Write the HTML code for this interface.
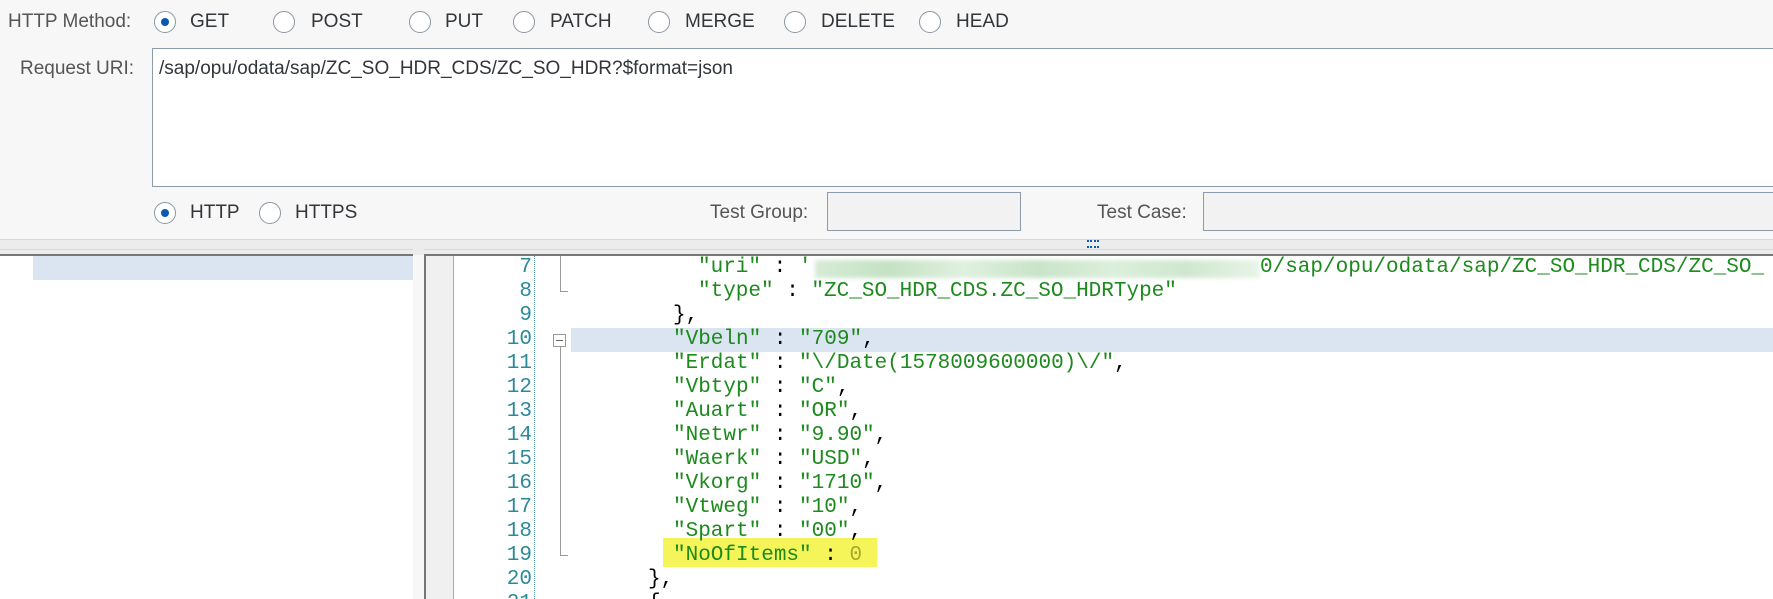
<!DOCTYPE html>
<html><head><meta charset="utf-8"><style>
*{margin:0;padding:0;box-sizing:border-box}
html{background:#fff;width:1773px;height:599px;overflow:hidden}
body{width:1773px;height:599px;overflow:hidden;background:#f7f7f7;font-family:"Liberation Sans",sans-serif;color:#32363a;position:relative}
.a{position:absolute;white-space:nowrap}
.lbl{font-size:19px;color:#555}
.t{font-size:19px;color:#32363a}
.r{position:absolute;width:22px;height:22px;border:1px solid #8a96a3;border-radius:50%;background:#fff}
.r.on::after{content:"";position:absolute;left:6px;top:6px;width:8px;height:8px;border-radius:50%;background:#0a58b0}
.code{font-family:"Liberation Mono",monospace;font-size:21px;line-height:24px;color:#1d8a1d}
.k{color:#000}
.ln{position:absolute;left:455px;width:77px;text-align:right;font-family:"Liberation Mono",monospace;font-size:21px;line-height:24px;color:#2b8a9a}
</style></head><body>
<div class="a lbl" style="left:8px;top:11px">HTTP Method:</div>
<div class="r on" style="left:154px;top:11px"></div><div class="a t" style="left:190px;top:11px">GET</div>
<div class="r" style="left:273px;top:11px"></div><div class="a t" style="left:311px;top:11px">POST</div>
<div class="r" style="left:409px;top:11px"></div><div class="a t" style="left:445px;top:11px">PUT</div>
<div class="r" style="left:513px;top:11px"></div><div class="a t" style="left:550px;top:11px">PATCH</div>
<div class="r" style="left:648px;top:11px"></div><div class="a t" style="left:685px;top:11px">MERGE</div>
<div class="r" style="left:784px;top:11px"></div><div class="a t" style="left:821px;top:11px">DELETE</div>
<div class="r" style="left:919px;top:11px"></div><div class="a t" style="left:956px;top:11px">HEAD</div>

<div class="a lbl" style="left:20px;top:58px">Request URI:</div>
<div class="a" style="left:152px;top:48px;width:1630px;height:139px;background:#fff;border:1px solid #8c9bab"></div>
<div class="a t" style="left:159px;top:58px">/sap/opu/odata/sap/ZC_SO_HDR_CDS/ZC_SO_HDR?$format=json</div>

<div class="r on" style="left:154px;top:202px"></div><div class="a t" style="left:190px;top:202px">HTTP</div>
<div class="r" style="left:259px;top:202px"></div><div class="a t" style="left:295px;top:202px">HTTPS</div>
<div class="a lbl" style="left:710px;top:202px">Test Group:</div>
<div class="a" style="left:827px;top:192px;width:194px;height:39px;background:#f2f2f2;border:1px solid #8c9bab"></div>
<div class="a lbl" style="left:1097px;top:202px">Test Case:</div>
<div class="a" style="left:1203px;top:192px;width:580px;height:39px;background:#f2f2f2;border:1px solid #8c9bab"></div>

<div class="a" style="left:0;top:239px;width:1773px;height:16px;background:#ececec;border-top:1px solid #d8d8d8"></div>
<div class="a" style="left:0;top:249px;width:413px;height:1px;background:#d8d8d8"></div>
<div class="a" style="left:424px;top:249px;width:1349px;height:1px;background:#d8d8d8"></div>
<div class="a" style="left:1087px;top:240px;width:12px;border-top:2px dotted #0a58b0"></div>
<div class="a" style="left:1087px;top:246px;width:12px;border-top:2px dotted #0a58b0"></div>

<div class="a" style="left:0;top:254px;width:413px;height:345px;background:#fff;border-top:2px solid #777"></div>
<div class="a" style="left:33px;top:256px;width:380px;height:24px;background:#dbe5f1"></div>

<div class="a" style="left:424px;top:254px;width:1349px;height:345px;overflow:hidden;background:#fff;border-top:2px solid #777;border-left:2px solid #777"></div>
<div class="a" style="left:426px;top:256px;width:28px;height:343px;background:#f0f0f0;border-right:1px solid #aaa"></div>
<div class="a" style="left:534px;top:256px;height:343px;border-left:1px dotted #5a9aa8"></div>
<div class="a" style="left:571px;top:328px;width:1202px;height:24px;background:#dbe5f1"></div>
<div class="a" style="left:663px;top:538px;width:214px;height:29px;background:#f5f55a"></div>
<div class="a" style="left:560px;top:256px;width:8px;height:36px;border-left:1px solid #999;border-bottom:1px solid #999"></div>
<div class="a" style="left:553px;top:334px;width:13px;height:13px;border:1px solid #999;background:#fff"></div>
<div class="a" style="left:556px;top:340px;width:7px;height:1px;background:#666"></div>
<div class="a" style="left:560px;top:347px;width:8px;height:209px;border-left:1px solid #999;border-bottom:1px solid #999"></div>

<div class="ln" style="top:256px">7<br>8<br>9<br>10<br>11<br>12<br>13<br>14<br>15<br>16<br>17<br>18<br>19<br>20<br>21</div>

<div class="a code" style="left:698px;top:256px">"uri" <span class="k">:</span> '</div>
<div class="a" style="left:815px;top:260px;width:445px;height:18px;background:linear-gradient(90deg,#d6ebd6,#c4e2c4,#e0f0e0,#c8e4c8,#dcefdc,#cfe7cf,#e8f4e8);filter:blur(2px)"></div>
<div class="a code" style="left:1260px;top:256px">0/sap/opu/odata/sap/ZC_SO_HDR_CDS/ZC_SO_</div>
<div class="a code" style="left:698px;top:280px">"type" <span class="k">:</span> "ZC_SO_HDR_CDS.ZC_SO_HDRType"</div>
<div class="a code k" style="left:673px;top:304px">},</div>
<div class="a code" style="left:673px;top:328px">"Vbeln" <span class="k">:</span> "709"<span class="k">,</span><br>"Erdat" <span class="k">:</span> "\/Date(1578009600000)\/"<span class="k">,</span><br>"Vbtyp" <span class="k">:</span> "C"<span class="k">,</span><br>"Auart" <span class="k">:</span> "OR"<span class="k">,</span><br>"Netwr" <span class="k">:</span> "9.90"<span class="k">,</span><br>"Waerk" <span class="k">:</span> "USD"<span class="k">,</span><br>"Vkorg" <span class="k">:</span> "1710"<span class="k">,</span><br>"Vtweg" <span class="k">:</span> "10"<span class="k">,</span><br>"Spart" <span class="k">:</span> "00"<span class="k">,</span><br>"NoOfItems" <span class="k">:</span> <span style="color:#a8a830">0</span></div>
<div class="a code k" style="left:648px;top:568px">},<br>{</div>
</body></html>
